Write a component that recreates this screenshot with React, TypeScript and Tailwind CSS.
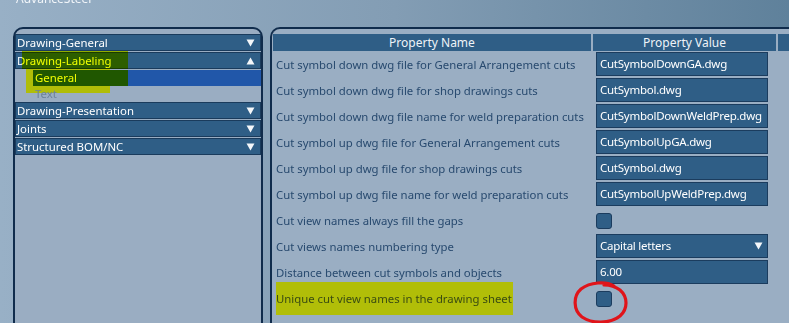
import React from 'react';

const Tri = ({ up = false }: { up?: boolean }) => (
  <svg width="9" height="8" viewBox="0 0 9 8" className="shrink-0">
    {up ? <path d="M4.5 0.5 L8.5 7.5 L0.5 7.5 Z" fill="#f4f7fa" /> : <path d="M0.5 0.5 L8.5 0.5 L4.5 7.5 Z" fill="#f4f7fa" />}
  </svg>
);

const GroupRow = ({ label, up = false }: { label: string; up?: boolean }) => (
  <div className="h-[17px] mb-[1px] flex items-center justify-between bg-[#2f5e86] border border-[#1a3b5c] pl-[1px] pr-[5px] text-white">
    <span>{label}</span>
    <Tri up={up} />
  </div>
);

const rows: { name: string; kind: 'text' | 'check' | 'select'; value?: string }[] = [
  { name: 'Cut symbol down dwg file for General Arrangement cuts', kind: 'text', value: 'CutSymbolDownGA.dwg' },
  { name: 'Cut symbol down dwg file for shop drawings cuts', kind: 'text', value: 'CutSymbol.dwg' },
  { name: 'Cut symbol down dwg file name for weld preparation cuts', kind: 'text', value: 'CutSymbolDownWeldPrep.dwg' },
  { name: 'Cut symbol up dwg file for General Arrangement cuts', kind: 'text', value: 'CutSymbolUpGA.dwg' },
  { name: 'Cut symbol up dwg file for shop drawings cuts', kind: 'text', value: 'CutSymbol.dwg' },
  { name: 'Cut symbol up dwg file name for weld preparation cuts', kind: 'text', value: 'CutSymbolUpWeldPrep.dwg' },
  { name: 'Cut view names always fill the gaps', kind: 'check' },
  { name: 'Cut views names numbering type', kind: 'select', value: 'Capital letters' },
  { name: 'Distance between cut symbols and objects', kind: 'text', value: '6.00' },
  { name: 'Unique cut view names in the drawing sheet', kind: 'check' },
];

export default function App() {
  return (
    <div
      className="relative w-[789px] h-[323px] overflow-hidden bg-gradient-to-r from-[#98b0c6] via-[#839db4] to-[#5f819b] text-[12px] leading-none"
      style={{ fontFamily: '"Noto Sans", "Open Sans", sans-serif' }}
    >
      <div className="h-[27px] pl-[16px] overflow-hidden">
        <div className="-translate-y-[7px] text-[12px] text-[#f2f6fa]">AdvanceSteel</div>
      </div>

      <div className="flex items-start h-[296px]">
        {/* left tree panel */}
        <div className="relative ml-[13px] w-[250px] h-[310px] border-2 border-[#102c4c] rounded-t-[10px] bg-[#9aadc2] pt-[5px] px-0 text-[11.4px]">
          {/* highlighter on the light background, under the text */}
          <div className="absolute left-[11px] top-[38px] w-[84px] h-[26px] bg-[#b0bd08]" />

          <div className="relative">
            <GroupRow label="Drawing-General" />
            <GroupRow label="Drawing-Labeling" up />
            <div className="h-[16px] ml-[18px] flex items-center bg-[#2157a9] pl-[2px] text-white">General</div>
            <div className="h-[16px] ml-[20px] flex items-center text-[#6c8299]">Text</div>
            <GroupRow label="Drawing-Presentation" />
            <GroupRow label="Joints" />
            <GroupRow label="Structured BOM/NC" />
          </div>

          {/* highlighter over the dark rows */}
          <div className="absolute left-[7px] top-[22px] w-[106px] h-[18px] bg-[#f2ff00] mix-blend-multiply" />
          <div className="absolute left-[18px] top-[41px] w-[95px] h-[16px] bg-[#f2ff00] mix-blend-multiply" />
        </div>

        {/* right property grid */}
        <div className="relative ml-[7px] flex-1 h-[310px] border-2 border-r-0 border-[#102c4c] rounded-tl-[10px] bg-[#9aaec3] pt-[5px] pl-px">
          {/* highlighter on last row */}
          <div className="absolute left-[4px] top-[253px] w-[237px] h-[33px] bg-[#b1be08]" />

          <div className="relative h-[17px] flex text-[#eef3f8]">
            <div className="w-[318px] bg-[#2f5e86] flex items-center justify-center">Property Name</div>
            <div className="w-[2px] bg-[#9aaec3]" />
            <div className="w-[183px] bg-[#2f5e86] flex items-center justify-center">Property Value</div>
            <div className="w-[2px] bg-[#9aaec3]" />
            <div className="flex-1 bg-[#2f5e86]" />
          </div>
          <div className="relative mt-[1px]">
            {rows.map((r, i) => (
              <div key={r.name} className="h-[26px] flex">
                <div
                  className={`w-[320px] shrink-0 pl-[3px] flex items-center whitespace-nowrap text-[11.35px] ${
                    i === rows.length - 1 ? 'text-[#3a4c12]' : 'text-[#284a6f]'
                  }`}
                >
                  {r.name}
                </div>
                <div className="pl-[3px] shrink-0">
                  {r.kind === 'text' && (
                    <div className="w-[172px] h-[24px] bg-[#2f5e86] border border-[#1b3c5e] pl-[3px] flex items-center whitespace-nowrap text-[11.5px] tracking-[-0.25px] text-white">
                      {r.value}
                    </div>
                  )}
                  {r.kind === 'select' && (
                    <div className="w-[172px] h-[24px] bg-[#2f5e86] border border-[#1b3c5e] pl-[3px] pr-[4px] flex items-center justify-between text-[11.5px] tracking-[-0.25px] text-white">
                      <span>{r.value}</span>
                      <Tri />
                    </div>
                  )}
                  {r.kind === 'check' && (
                    <div className="h-[26px] flex items-center">
                      <div className="w-[16px] h-[16px] rounded-[3px] bg-[#2f5e86] border border-[#1b3c5e]" />
                    </div>
                  )}
                </div>
              </div>
            ))}
          </div>
        </div>
      </div>

      {/* red circle annotation */}
      <svg className="absolute left-[570px] top-[280px]" width="64" height="46" viewBox="0 0 64 46">
        <path
          d="M44 6 C36 1 20 2 11 9 C3 16 3 30 12 37 C22 44 40 44 50 36 C58 29 58 17 50 10 C46 7 40 5 34 5"
          fill="none"
          stroke="#e0141a"
          strokeWidth="3.2"
          strokeLinecap="round"
        />
      </svg>
    </div>
  );
}
